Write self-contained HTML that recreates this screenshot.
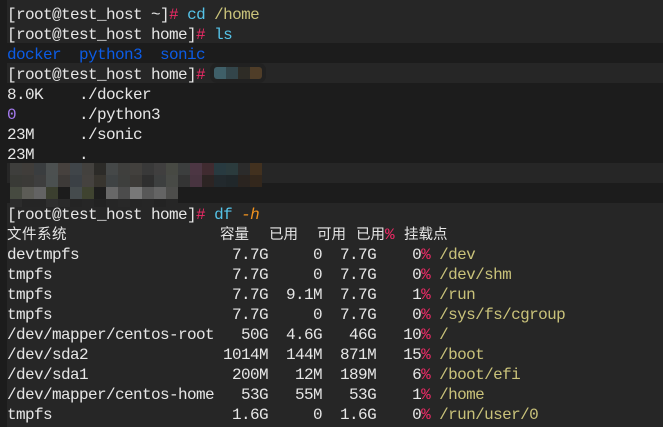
<!DOCTYPE html>
<html><head><meta charset="utf-8"><style>
html,body{margin:0;padding:0;background:#262626}
#s{position:relative;width:663px;height:427px;overflow:hidden;background:#262626;font:16px/20px "Liberation Mono","Noto Sans CJK SC",monospace;letter-spacing:-.6px;color:#e6e6e6}
.b{position:absolute;left:0;width:663px;background:#1c1c1c}
.l{position:absolute;left:7px;white-space:pre;height:20px}
.p{color:#ee2a66}.c{color:#55c3e8}.y{color:#c9c27a}.o{color:#f0921e;font-style:italic}.u{color:#0c5ce6}.v{color:#a57bf0}
.k{position:absolute;top:224px;font-family:"Noto Sans CJK SC",sans-serif;font-size:14.5px;letter-spacing:0;line-height:20px;white-space:pre}
.r{position:absolute;left:10px;height:12px;display:flex}
.r i{display:block;width:12px;height:100%;flex:none}
</style></head><body><div id="s">
<div class="b" style="top:43px;height:20px"></div>
<div class="b" style="top:83px;height:80px"></div>
<div class="b" style="top:183px;height:20px"></div>
<div class="b" style="top:0;width:7px;height:427px"></div>

<div class="l" style="top:5px">[root@test_host ~]<span class="p">#</span> <span class="c">cd</span> <span class="y">/home</span></div>
<div class="l" style="top:25px">[root@test_host home]<span class="p">#</span> <span class="c">ls</span></div>
<div class="l" style="top:45px"><span class="u">docker  python3  sonic</span></div>
<div class="l" style="top:65px">[root@test_host home]<span class="p">#</span></div>
<div class="l" style="top:85px">8.0K    ./docker</div>
<div class="l" style="top:105px"><span class="v">0</span>       ./python3</div>
<div class="l" style="top:125px">23M     ./sonic</div>
<div class="l" style="top:145px">23M     .</div>

<!-- blur in prompt row -->
<div style="position:absolute;left:210px;top:63px;width:56px;height:20px;border-radius:7px;background:#212121"></div>
<div style="position:absolute;left:214px;top:67px;width:48px;height:12px;border-radius:3px;overflow:hidden;background:linear-gradient(90deg,#3f5f68 0 12px,#33454a 12px 24px,#2e2c26 24px 36px,#4f3d28 36px)"></div>

<!-- mosaic -->
<div class="r" style="top:163px"><i style="background:#3e3e3c"></i><i style="background:#403d3a"></i><i style="background:#3a3d3f"></i><i style="background:#4c5050"></i><i style="background:#46413e"></i><i style="background:#404549"></i><i style="background:#43413e"></i><i style="background:#2c2b28"></i><i style="background:#454848"></i><i style="background:#3f3f3d"></i><i style="background:#42403d"></i><i style="background:#393939"></i><i style="background:#403f3f"></i><i style="background:#474943"></i><i style="background:#3c3e3e"></i><i style="background:#4c3643"></i><i style="background:#402b30"></i><i style="background:#283a40"></i><i style="background:#2b3b3d"></i><i style="background:#2b2b2b"></i><i style="background:#42311f"></i></div>
<div class="r" style="top:175px"><i style="background:#393a36"></i><i style="background:#3b3a37"></i><i style="background:#3e3e3e"></i><i style="background:#4b5050"></i><i style="background:#3d3a38"></i><i style="background:#3b4045"></i><i style="background:#45423f"></i><i style="background:#38352f"></i><i style="background:#3f4344"></i><i style="background:#3e3f3d"></i><i style="background:#3d3b38"></i><i style="background:#2f2f2f"></i><i style="background:#3d3f3f"></i><i style="background:#484a46"></i><i style="background:#343434"></i><i style="background:#483440"></i><i style="background:#2c2423"></i><i style="background:#22292d"></i><i style="background:#20272a"></i><i style="background:#2a2420"></i><i style="background:#33271c"></i></div>
<div class="r" style="top:187px"><i style="background:#464a40"></i><i style="background:#5c5c56"></i><i style="background:#636363"></i><i style="background:#3b3f2f"></i><i style="background:#1c1c1c"></i><i style="background:#454b4d"></i><i style="background:#3f4330"></i><i style="background:#1e1e1e"></i><i style="background:#686868"></i><i style="background:#4c4c4c"></i><i style="background:#787878"></i><i style="background:#585858"></i><i style="background:#646464"></i><i style="background:#4d4d4b"></i></div>
<div class="r" style="top:199px;height:8px"><i style="background:#2c2c2c"></i><i style="background:#252525"></i><i style="background:#252525"></i><i style="background:#2e2e2e"></i><i style="background:#2a2a2a"></i><i style="background:#242424"></i><i style="background:#262626"></i><i style="background:#222222"></i><i style="background:#262626"></i><i style="background:#282828"></i><i style="background:#252525"></i><i style="background:#262626"></i><i style="background:#232323"></i><i style="background:#262626"></i></div>

<div class="l" style="top:205px">[root@test_host home]<span class="p">#</span> <span class="c">df</span> <span class="o">-h</span></div>

<div class="k" style="left:7px;letter-spacing:.5px">文件系统</div>
<div class="k" style="left:220px">容量</div>
<div class="k" style="left:269px">已用</div>
<div class="k" style="left:317px">可用</div>
<div class="k" style="left:356px">已用</div>
<div class="l" style="top:225px;left:385px"><span class="p">%</span></div>
<div class="k" style="left:404px">挂载点</div>

<div class="l" style="top:245px">devtmpfs                 7.7G     0  7.7G    0<span class="p">%</span> <span class="y">/dev</span></div>
<div class="l" style="top:265px">tmpfs                    7.7G     0  7.7G    0<span class="p">%</span> <span class="y">/dev/shm</span></div>
<div class="l" style="top:285px">tmpfs                    7.7G  9.1M  7.7G    1<span class="p">%</span> <span class="y">/run</span></div>
<div class="l" style="top:305px">tmpfs                    7.7G     0  7.7G    0<span class="p">%</span> <span class="y">/sys/fs/cgroup</span></div>
<div class="l" style="top:325px">/dev/mapper/centos-root   50G  4.6G   46G   10<span class="p">%</span> <span class="y">/</span></div>
<div class="l" style="top:345px">/dev/sda2               1014M  144M  871M   15<span class="p">%</span> <span class="y">/boot</span></div>
<div class="l" style="top:365px">/dev/sda1                200M   12M  189M    6<span class="p">%</span> <span class="y">/boot/efi</span></div>
<div class="l" style="top:385px">/dev/mapper/centos-home   53G   55M   53G    1<span class="p">%</span> <span class="y">/home</span></div>
<div class="l" style="top:405px">tmpfs                    1.6G     0  1.6G    0<span class="p">%</span> <span class="y">/run/user/0</span></div>
</div></body></html>
